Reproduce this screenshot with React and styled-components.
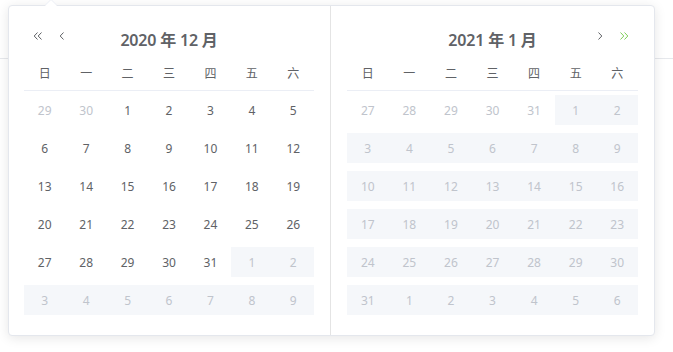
import React from "react";
import styled, { createGlobalStyle } from "styled-components";

const GlobalStyle = createGlobalStyle`
  html, body {
    margin: 0;
    padding: 0;
    background: #ffffff;
    font-family: "Noto Sans", "Noto Sans CJK SC", sans-serif;
  }
`;

const WEEK = ["日", "一", "二", "三", "四", "五", "六"];

// build 42 cells for a month; anything after the cutoff is disabled
const buildMonth = (year, month) => {
  const first = new Date(year, month, 1).getDay();
  const days = new Date(year, month + 1, 0).getDate();
  const prevDays = new Date(year, month, 0).getDate();
  const cells = [];
  for (let i = first - 1; i >= 0; i--) {
    cells.push({ day: prevDays - i, date: new Date(year, month - 1, prevDays - i), other: true });
  }
  for (let d = 1; d <= days; d++) {
    cells.push({ day: d, date: new Date(year, month, d), other: false });
  }
  let n = 1;
  while (cells.length < 42) {
    cells.push({ day: n, date: new Date(year, month + 1, n), other: true });
    n++;
  }
  const cutoff = new Date(2020, 11, 31);
  return cells.map((c) => ({ ...c, disabled: c.date > cutoff }));
};

const Chevron = ({ dir = "left", double, color }) => (
  <svg width={double ? 10 : 6} height="10" viewBox={double ? "0 0 10 10" : "0 0 6 10"} fill="none">
    {dir === "left" ? (
      <>
        <path d="M4.5 1.5 L1.2 5 L4.5 8.5" stroke={color} strokeWidth="1" />
        {double && <path d="M8.5 1.5 L5.2 5 L8.5 8.5" stroke={color} strokeWidth="1" />}
      </>
    ) : (
      <>
        <path d="M1.5 1.5 L4.8 5 L1.5 8.5" stroke={color} strokeWidth="1" />
        {double && <path d="M5.5 1.5 L8.8 5 L5.5 8.5" stroke={color} strokeWidth="1" />}
      </>
    )}
  </svg>
);

const MonthPanel = ({ side, year, month }) => {
  const cells = buildMonth(year, month);
  const rows = [];
  for (let r = 0; r < 6; r++) rows.push(cells.slice(r * 7, r * 7 + 7));
  return (
    <Panel $side={side}>
      <Header>
        <HeadSide $align="left">
          {side === "left" && (
            <>
              <IconBtn><Chevron dir="left" double color="#606266" /></IconBtn>
              <IconBtn><Chevron dir="left" color="#606266" /></IconBtn>
            </>
          )}
        </HeadSide>
        <Title>{year} 年 {month + 1} 月</Title>
        <HeadSide $align="right">
          {side === "right" && (
            <>
              <IconBtn><Chevron dir="right" color="#606266" /></IconBtn>
              <IconBtn><Chevron dir="right" double color="#7fcf58" /></IconBtn>
            </>
          )}
        </HeadSide>
      </Header>
      <WeekRow>
        {WEEK.map((w) => (
          <WeekCell key={w}>{w}</WeekCell>
        ))}
      </WeekRow>
      {rows.map((row, i) => (
        <DateRow key={i}>
          {row.map((c, j) => (
            <DateCell key={j} $disabled={c.disabled} $other={c.other}>
              {c.day}
            </DateCell>
          ))}
        </DateRow>
      ))}
    </Panel>
  );
};

export default function App() {
  return (
    <>
      <GlobalStyle />
      <Page>
        <BackLine />
        <Popup>
          <MonthPanel side="left" year={2020} month={11} />
          <MonthPanel side="right" year={2021} month={0} />
        </Popup>
      </Page>
    </>
  );
}

const Page = styled.div`
  position: relative;
  width: 673px;
  height: 352px;
  padding: 5px 0 0 8px;
  box-sizing: border-box;
  overflow: hidden;
`;

const BackLine = styled.div`
  position: absolute;
  left: 0;
  right: 0;
  top: 58px;
  height: 1px;
  background: #e6e8ec;
`;

const Popup = styled.div`
  position: relative;
  display: flex;
  width: 647px;
  box-sizing: border-box;
  background: #fff;
  border: 1px solid #e4e7ed;
  border-radius: 4px;
  box-shadow: 0 2px 12px 0 rgba(0, 0, 0, 0.1);
  color: #606266;

  &::before,
  &::after {
    content: "";
    position: absolute;
    left: 36px;
    width: 0;
    height: 0;
    border: 6px solid transparent;
    border-top-width: 0;
  }
  &::before {
    top: -7px;
    border-bottom-color: #ebeef5;
  }
  &::after {
    top: -6px;
    border-bottom-color: #fff;
  }
`;

const Panel = styled.div`
  box-sizing: border-box;
  width: ${(p) => (p.$side === "left" ? "322px" : "323px")};
  padding: ${(p) => (p.$side === "left" ? "16px 16px 16px 15px" : "16px")};
  border-right: ${(p) => (p.$side === "left" ? "1px solid #e4e4e4" : "none")};
`;

const Header = styled.div`
  display: grid;
  grid-template-columns: 1fr auto 1fr;
  align-items: center;
  height: 33px;
`;

const HeadSide = styled.div`
  display: flex;
  align-items: center;
  justify-content: ${(p) => (p.$align === "left" ? "flex-start" : "flex-end")};
  gap: 12px;
  padding: ${(p) => (p.$align === "left" ? "0 0 5px 8px" : "0 8px 5px 0")};
`;

const IconBtn = styled.span`
  display: inline-flex;
  align-items: center;
  justify-content: center;
  width: 12px;
  height: 12px;
  cursor: pointer;
`;

const Title = styled.div`
  font-size: 16px;
  font-weight: 600;
  letter-spacing: -0.2px;
  color: #606266;
  white-space: nowrap;
`;

const WeekRow = styled.div`
  display: grid;
  grid-template-columns: repeat(7, 1fr);
  height: 35px;
  border-bottom: 1px solid #ebeef5;
`;

const WeekCell = styled.div`
  display: flex;
  align-items: center;
  justify-content: center;
  font-size: 12px;
  color: #606266;
`;

const DateRow = styled.div`
  display: grid;
  grid-template-columns: repeat(7, 1fr);
  padding: 4px 0;
`;

const DateCell = styled.div`
  height: 30px;
  display: flex;
  align-items: center;
  justify-content: center;
  font-size: 12px;
  color: ${(p) => (p.$disabled || p.$other ? "#c0c4cc" : "#606266")};
  background: ${(p) => (p.$disabled ? "#f5f7fa" : "transparent")};
`;
